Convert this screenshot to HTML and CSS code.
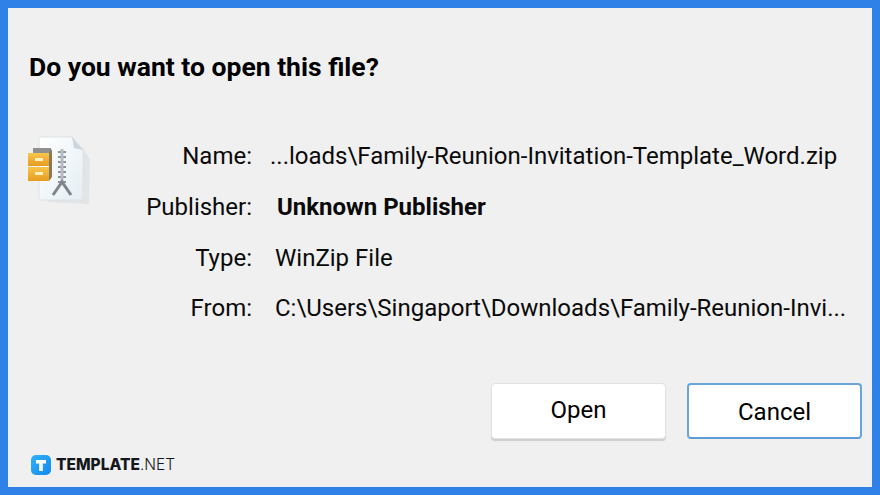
FILE: index.html
```html
<!DOCTYPE html>
<html lang="en">
<head>
<meta charset="UTF-8" />
<title>Open File Warning</title>
<link rel="stylesheet" href="styles.css">
</head>
<body>

<main class="dialog">
  <h1 class="dialog-title">Do you want to open this file?</h1>

  <div class="dialog-body">
    <svg class="file-icon" width="64" height="72" viewBox="0 0 64 72" aria-hidden="true">
      <defs>
        <linearGradient id="sheet" x1="0" y1="0" x2="1" y2="1">
          <stop offset="0" stop-color="#ffffff" />
          <stop offset="1" stop-color="#e4eef4" />
        </linearGradient>
        <linearGradient id="drawer" x1="0" y1="0" x2="0" y2="1">
          <stop offset="0" stop-color="#f8c64c" />
          <stop offset="1" stop-color="#e89c20" />
        </linearGradient>
      </defs>
      <path d="M16 8 L54 12 L62 24 L61 69 L20 67 Z" fill="#d9dcde" opacity="0.6" />
      <path d="M11 2 H44 L55 15 V65 H11 Z" fill="url(#sheet)" stroke="#dde2e5" />
      <path d="M44 2 L46 13 L55 15 Z" fill="#ccd6dc" />
      <path d="M30 17 H38 M30 22 H38 M30 27 H38 M30 32 H38 M30 37 H38 M30 42 H38 M30 47 H38" stroke="#8d9499" stroke-width="2" />
      <path d="M34 14 V48" stroke="#b4babf" stroke-width="3" />
      <path d="M25 60 L34 47 L43 60" fill="none" stroke="#7f8589" stroke-width="3" />
      <path d="M5 13 H23 V19 H5 Z" fill="#8f8f8f" />
      <rect x="0" y="18" width="21" height="13" fill="url(#drawer)" />
      <rect x="0" y="32" width="21" height="14" fill="url(#drawer)" />
      <rect x="7" y="23" width="8" height="3" fill="#fff1c4" />
      <rect x="7" y="37" width="8" height="3" fill="#fff1c4" />
      <path d="M21 18 L24 14 V42 L21 46 Z" fill="#8b7a55" />
    </svg>

    <dl class="details">
      <dt>Name:</dt>
      <dd class="value-name">...loads\Family-Reunion-Invitation-Template_Word.zip</dd>
      <dt>Publisher:</dt>
      <dd class="value-publisher">Unknown Publisher</dd>
      <dt>Type:</dt>
      <dd>WinZip File</dd>
      <dt>From:</dt>
      <dd>C:\Users\Singaport\Downloads\Family-Reunion-Invi...</dd>
    </dl>
  </div>

  <div class="dialog-buttons">
    <button class="btn btn-open" type="button"><span>Open</span></button>
    <button class="btn btn-cancel" type="button"><span>Cancel</span></button>
  </div>

  <footer class="brand">
    <svg class="brand-mark" width="20" height="20" viewBox="0 0 20 20" aria-hidden="true">
      <defs>
        <linearGradient id="mark" x1="0" y1="0" x2="1" y2="1">
          <stop offset="0" stop-color="#2fb4fb" />
          <stop offset="1" stop-color="#1487ee" />
        </linearGradient>
      </defs>
      <rect width="20" height="20" rx="5" fill="url(#mark)" />
      <path d="M5 5 H15 V8.4 H11.8 V16 H8.2 V8.4 H5 Z" fill="#fff" />
    </svg>
    <span class="brand-name">TEMPLATE<span class="brand-tld">.NET</span></span>
  </footer>
</main>

</body>
</html>
```

FILE: styles.css
```css
/* Reset and base */
* {
  box-sizing: border-box;
  margin: 0;
  padding: 0;
}
body {
  font-family: Roboto, 'Liberation Sans', sans-serif;
  background: #f0f0f0;
  color: #0a0a0a;
  width: 880px;
  height: 495px;
  overflow: hidden;
}

/* Dialog frame */
.dialog {
  width: 880px;
  height: 495px;
  border: 8px solid #2f80e7;
  padding: 45px 18px 0 21px;
  display: flex;
  flex-direction: column;
}

.dialog-title {
  font-size: 26.5px;
  font-weight: 700;
  line-height: 30px;
  margin-top: -1px;
  margin-bottom: 1px;
  color: #000;
}

/* Icon + details */
.dialog-body {
  display: flex;
  margin-top: 52px;
  margin-left: -1px;
}

.file-icon {
  flex: none;
  filter: blur(0.5px);
}

.details {
  display: grid;
  grid-template-columns: 160px 1fr;
  grid-auto-rows: 50.67px;
  align-items: center;
  margin-top: -4px;
  font-size: 24px;
  white-space: nowrap;
}
.details dt {
  text-align: right;
}
.details dd {
  margin-left: 23px;
}
.details .value-name {
  margin-left: 18px;
}
.details .value-publisher {
  margin-left: 25px;
  font-weight: 700;
}

/* Buttons */
.dialog-buttons {
  display: flex;
  justify-content: flex-end;
  gap: 21px;
  margin-top: 49px;
  margin-right: -8px;
}

.btn {
  width: 175px;
  height: 56px;
  background: #fff;
  border: 1px solid #e2e2e2;
  border-radius: 4px;
  font-family: inherit;
  font-size: 24px;
  color: #000;
  box-shadow: 0 2px 1px #cfcfcf;
}
.btn-open span {
  position: relative;
  top: -1px;
}
.btn-cancel span {
  position: relative;
  top: 1px;
}
.btn-cancel {
  border: 2px solid #6aa5da;
  border-bottom-color: #5b9bd5;
  box-shadow: none;
}

/* Logo */
.brand {
  display: flex;
  align-items: center;
  gap: 5px;
  margin-top: 16px;
  margin-left: 2px;
}
.brand-name {
  font-family: Inter, Roboto, sans-serif;
  font-size: 15.5px;
  font-weight: 800;
  color: #14181c;
}
.brand-tld {
  font-weight: 300;
}
```
